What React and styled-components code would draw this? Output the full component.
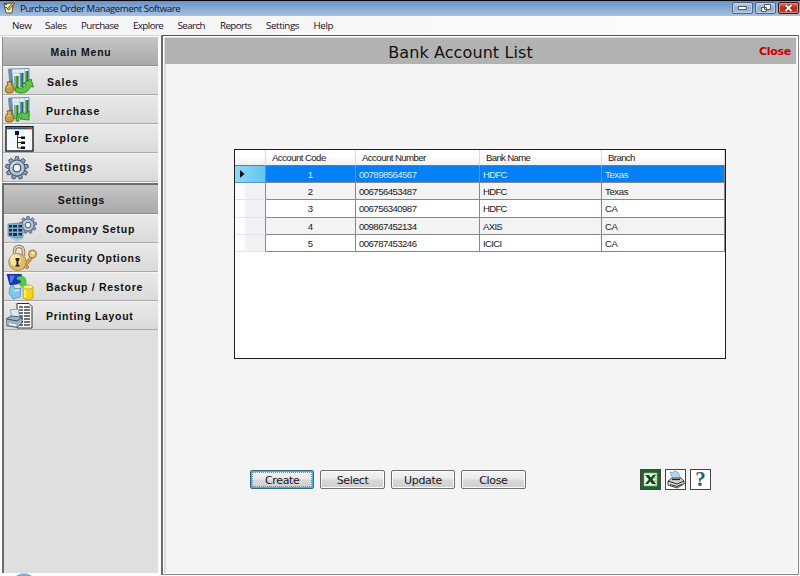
import React from 'react'
import styled, { createGlobalStyle, css } from 'styled-components'

const colors = {
  text: '#111',
  panel: '#f4f4f4',
  sidebar: '#dfdfdf',
  line: '#6b6b6b',
  selected: '#0580f5',
}

const GlobalStyle = createGlobalStyle`
  * {
    box-sizing: border-box;
  }
  body {
    margin: 0;
    overflow: hidden;
    background: #fbfbfb;
    color: ${colors.text};
  }
  svg {
    display: block;
  }
`

const Window = styled.div`
  width: 800px;
  height: 576px;
  display: flex;
  flex-direction: column;
  overflow: hidden;
`

const TitleBar = styled.header`
  height: 16px;
  flex: none;
  display: flex;
  align-items: flex-start;
  padding: 0 1px 0 3px;
  border-top: 1px solid #05060f;
  background: linear-gradient(#6d93c4, #86a9d2 45%, #a5c0e2);
`

const TitleText = styled.span`
  flex: 1;
  padding-left: 5px;
  font: 9.6px/15px 'Open Sans', sans-serif;
  letter-spacing: -0.42px;
  color: #0b1630;
  white-space: nowrap;
`

const WindowButtons = styled.div`
  display: flex;
  gap: 2px;
  padding-top: 1px;
`

const WindowButton = styled.div`
  width: 21px;
  height: 12px;
  display: flex;
  align-items: center;
  justify-content: center;
  border: 1px solid ${p => (p.$danger ? '#4b1414' : '#4b6483')};
  border-radius: 2px;
  box-shadow: inset 0 0 0 1px ${p => (p.$danger ? '#d98b7c' : '#bcd0ea')};
  background: ${p =>
    p.$danger
      ? 'linear-gradient(#d5806f, #b52a18 50%, #cc3f28)'
      : 'linear-gradient(#c0d3eb, #8fadd2 50%, #a4c0e2)'};
`

const MenuBar = styled.nav`
  height: 19px;
  flex: none;
  display: flex;
  padding-left: 12px;
  background: linear-gradient(90deg, #f4f4f4, #fcfcfc);
`

const MenuItem = styled.span`
  width: ${p => p.$width}px;
  flex: none;
  font: 9.8px/19px 'Open Sans', sans-serif;
  letter-spacing: ${p => p.$spacing}px;
  color: #1c0c24;
`

const Body = styled.div`
  flex: 1;
  min-height: 0;
  display: flex;
`

const Sidebar = styled.aside`
  width: 159px;
  flex: none;
  display: flex;
  flex-direction: column;
  padding: 1px 1px 3px 2px;
  border-top: 1px solid #d4d4d4;
`

const Group = styled.section`
  flex: ${p => (p.$fill ? 1 : 'none')};
  background: ${colors.sidebar};
  border-left: 1px solid #8a8a8a;
  ${p =>
    p.$fill &&
    css`
      margin-top: 1px;
      border-left: 2px solid #6c6c6c;
      border-top: 2px solid #6c6c6c;
    `}
`

const GroupTitle = styled.h2`
  height: 29px;
  margin: 0;
  padding-top: 1px;
  padding-left: 1px;
  border-bottom: 1px solid #8e8e8e;
  background: linear-gradient(#c6c6c6, #a9a9a9);
  font: bold 10.4px/29px 'Liberation Sans', sans-serif;
  letter-spacing: 0.8px;
  text-align: center;
`

const SideItem = styled.div`
  height: 29px;
  display: flex;
  align-items: center;
  border-top: 1px solid #f3f3f3;
  border-bottom: 1px solid #a9a9a9;
  background: linear-gradient(#e9e9e9, #dadada);
`

const SideIcon = styled.span`
  width: ${p => p.$width}px;
  flex: none;
  padding-left: 2px;
`

const SideLabel = styled.span`
  margin-top: ${p => p.$drop || 0}px;
  font: bold 10.5px/14px 'Liberation Sans', sans-serif;
  letter-spacing: ${p => p.$spacing}px;
  white-space: nowrap;
`

const Panel = styled.main`
  flex: 1;
  display: flex;
  flex-direction: column;
  margin: 0 1px 1px 2px;
  border: 1px solid #858585;
  border-top-color: #555;
  border-left: 2px solid #6b6b6b;
  background: ${colors.panel};
  box-shadow: inset 0 0 0 1px #fff, inset 2px 2px 0 1px #dcdcdc;
`

const PanelHeader = styled.div`
  height: 26px;
  margin: 2px 2px 0 2px;
  display: grid;
  grid-template-columns: 60px 1fr 60px;
  align-items: center;
  background: #b2b2b2;
`

const PanelTitle = styled.h1`
  grid-column: 2;
  margin: 3px 0 0;
  padding-right: 40px;
  font: 16px/20px 'DejaVu Sans', sans-serif;
  letter-spacing: 0.1px;
  text-align: center;
`

const CloseLink = styled.span`
  padding-top: 1px;
  padding-right: 5px;
  font: bold 11px/14px 'DejaVu Sans', sans-serif;
  letter-spacing: -0.3px;
  color: #cb0000;
  text-align: right;
`

const Grid = styled.div`
  width: 492px;
  height: 210px;
  margin: 85px 0 0 71px;
  border: 1px solid #1d1d1d;
  background: #fff;
`

const GridRow = styled.div`
  height: ${p => p.$height}px;
  display: grid;
  grid-template-columns: 31px 90px 124px 122px 123px;
  grid-template-rows: 100%;
  background: ${p => p.$bg};
  color: ${p => (p.$selected ? '#d5ecf8' : '#1a1a1a')};
`

const HeadCell = styled.div`
  padding-left: 6px;
  border-right: 1px solid #dadada;
  border-bottom: 1px solid #777;
  background: linear-gradient(#fff 40%, #f0f0f0);
  color: #1a1a1a;
  font: 9.6px/16px 'Liberation Sans', sans-serif;
  letter-spacing: ${p => p.$spacing || 0}px;
`

const Cell = styled.div`
  padding-left: ${p => (p.$center ? 0 : 3)}px;
  border-right: 1px solid #888;
  border-bottom: 1px solid #888;
  font: 9.6px/17px 'Liberation Sans', sans-serif;
  letter-spacing: ${p => p.$spacing || 0}px;
  text-align: ${p => (p.$center ? 'center' : 'left')};
`

const RowHeader = styled.div`
  display: flex;
  align-items: center;
  padding-left: 5px;
  border-right: 1px solid #888;
  border-bottom: 1px solid ${p => (p.$selected ? '#5798bb' : '#e4e4ea')};
  background: ${p =>
    p.$selected
      ? 'linear-gradient(90deg, #8fd8f5, #64c4ee)'
      : 'linear-gradient(90deg, #fff 25%, #f1f1f6 40%)'};
`

const Footer = styled.div`
  display: flex;
  align-items: center;
  margin: 110px 87px 0 87px;
`

const Buttons = styled.div`
  flex: 1;
  display: flex;
  gap: 6px;
`

const Button = styled.button`
  width: 64.4px;
  height: 19px;
  padding: 1px 0 0;
  border: 1px solid #6f6f6f;
  border-radius: 2px;
  background: linear-gradient(#f4f4f4, #e9e9e9 48%, #d9d9d9 52%, #cfcfcf);
  box-shadow: inset 0 0 0 1px #fafafa;
  color: #1a1424;
  font: 11px/17px 'DejaVu Sans', sans-serif;
  letter-spacing: -0.35px;
  ${p =>
    p.$focused &&
    css`
      border-color: #286b88;
      box-shadow: inset 0 0 0 1px #55b0d0;
      outline: 1px dotted #6c8f9c;
      outline-offset: -3px;
    `}
`

const Tools = styled.div`
  display: flex;
  gap: 4px;
`

const Tool = styled.div`
  width: 21px;
  height: 21px;
  display: flex;
  align-items: center;
  justify-content: center;
  border: 1px solid #444;
  background: ${p => p.$bg || '#fff'};
`

const HelpMark = styled.span`
  font: bold 21px/19px 'Liberation Serif', serif;
  color: #34566d;
`

// top of the start orb peeking out at the bottom of the window
const Orb = styled.div`
  position: absolute;
  left: 15px;
  top: 573px;
  width: 18px;
  height: 12px;
  border-radius: 50%;
  border-top: 1px solid #b4cfe0;
  background: #72add2;
`

const AppIcon = () => (
  <svg width="12" height="13" viewBox="0 0 12 13">
    <path d="M1 3l7-1 2 2-1 8H3z" fill="#f6f2dc" stroke="#5b5330" />
    <path d="M4 8l6-7 1.500 1L6 9z" fill="#dfb83a" stroke="#4c3b10" strokeWidth=".7" />
    <path d="M1 2l3 2M2 6l2 1" stroke="#222" />
  </svg>
)

const SalesIcon = ({ purchase }) => (
  <svg width="29" height="26" viewBox="0 0 29 26">
    <path d="M4 1l20-.5v19L6 22z" fill="#e4edf3" stroke="#7890a5" />
    <path d="M3 1h4l2 20-4 .5z" fill="#6f8fb0" />
    <path d="M9 5h14M9 9h14M14.500 1v19M19.500 1v17" stroke="#b5c8d6" strokeWidth=".7" />
    <path d="M9.500 8h4v13h-4z" fill="#2d7b45" />
    <path d="M9.500 8h2v13h-2z" fill="#86bd5f" />
    <path d="M15 5h3.500v14H15z" fill="#236b6a" />
    <path d="M15 5h1.500v14H15z" fill="#5da2a5" />
    <path d="M20 3h3.500v14H20z" fill="#2c6d40" />
    <path d="M20 3h1.500v14H20z" fill="#7db15c" />
    {purchase ? (
      <path
        d="M11 24c0-8 6-10 10-7l3-3v9l-9-1 2.500-2.500C15 18 13 20 14 24z"
        fill="#5cc848"
        stroke="#1f7a1f"
        strokeWidth=".8"
      />
    ) : (
      <path
        d="M11 19c5 2 8 1 10-3l-3-.500 8-4.500 2.500 8-3-.500c-3 7-9 8-15 5z"
        fill="#5cc83e"
        stroke="#1f7a1c"
        strokeWidth=".8"
      />
    )}
    <path d="M2 14l5-1-1 3c4 3 4 8 0 9H2c-3-2-2-6 1-9z" fill="#c9993c" stroke="#6f4e18" strokeWidth=".8" />
    <path d="M3 16h3M2 20c1-2 3-2 4-1" stroke="#f2d58a" fill="none" />
  </svg>
)

const ExploreIcon = () => (
  <svg width="29" height="26" viewBox="0 0 29 26">
    <rect x="1" y=".7" width="27" height="24.300" fill="#f5fafc" stroke="#171c28" strokeWidth="1.400" />
    <path d="M1.500 2.300h22" stroke="#385473" strokeWidth="2" />
    <path d="M23 2.300h4" stroke="#b83532" strokeWidth="2" />
    <path d="M10 5h4v4h-4z" fill="#111" />
    <path d="M12.500 9v13h4M12.500 11.500h4M12.500 16.500h4" fill="none" stroke="#333" />
    <path d="M16 10.500h4V13h-4zM16 15.500h4V18h-4zM16 20.500h4V23h-4z" fill="#111" />
  </svg>
)

const teeth = [0, 40, 80, 120, 160, 200, 240, 280, 320]

const Gear = ({ size = 24 }) => (
  <svg width={size} height={size} viewBox="0 0 24 24">
    <g fill="#8da3b8" stroke="#3f566d" strokeWidth=".9">
      {teeth.map(a => (
        <path key={a} d="M9.500 5l1-4.300h3l1 4.300z" transform={`rotate(${a} 12 12)`} />
      ))}
      <circle cx="12" cy="12" r="8" />
    </g>
    <circle cx="12" cy="12" r="7.200" fill="#b3c4d3" />
    <circle cx="12" cy="12" r="3.800" fill="#eef2f4" stroke="#445b72" strokeWidth="1.300" />
    <path d="M6.500 11c.4-3 2.500-4.500 5-4.700" stroke="#e7eef4" fill="none" />
  </svg>
)

const CompanyIcon = () => (
  <svg width="31" height="26" viewBox="0 0 31 26">
    <svg x="13" y="0" width="18" height="18">
      <Gear size={18} />
    </svg>
    <path d="M4 22l7 3.500 7-3-6-3z" fill="#a3c6dc" />
    <path d="M2 8l10-1 5 1v13l-6 1-9-2z" fill="#86abc9" stroke="#567892" strokeWidth=".6" />
    <path d="M3 9h3v2.500H3zM7 9h4v2.500H7zM3 13h3v2.500H3zM7 13h4v2.500H7zM3 17h3v2.500H3zM7 17h4v3H7zM12.500 9H16v2.500h-3.500zM12.500 13H16v2.500h-3.500zM12.500 17H16v2.500h-3.500z" fill="#143252" />
  </svg>
)

const LockIcon = () => (
  <svg width="32" height="28" viewBox="0 0 32 28">
    <path d="M8.500 12V7c0-6 9-6 9 0v5" fill="none" stroke="#8a7959" strokeWidth="3.500" />
    <path d="M8.500 12V7c0-6 9-6 9 0v5" fill="none" stroke="#e5d8b6" strokeWidth="1.600" />
    <path d="M17 21l8-9 2 2-6 7 2 2-2 2-2-2-2 2z" fill="#d4a64c" stroke="#8a6322" strokeWidth=".7" />
    <circle cx="26.500" cy="10" r="4" fill="#e7c67a" stroke="#94702d" />
    <circle cx="27" cy="9" r="1.300" fill="#f6edcf" />
    <ellipse cx="11.500" cy="18" rx="8.800" ry="8.500" fill="#e3b963" stroke="#a47a2d" strokeWidth=".8" />
    <ellipse cx="9.500" cy="16" rx="5.500" ry="6" fill="#f6e2ab" />
    <path d="M9.500 14h4v2l-1 1v4h1v1.500h-4V21h1v-4l-1-1z" fill="#2a2111" />
  </svg>
)

const BackupIcon = () => (
  <svg width="29" height="26" viewBox="0 0 29 26">
    <path d="M1 0h14l2 9-13 2z" fill="#1c35b9" stroke="#16226c" strokeWidth=".7" />
    <path d="M4 1.500h5l-3 7-2 0z" fill="#4e7aee" />
    <path d="M11 3c5-2 9 0 9 4v4l2 0-5 3-5-5 3 0c0-3-2-4-4-3z" fill="#4ed044" stroke="#269327" strokeWidth=".5" />
    <path d="M4 13l3-2 2 4 6-1-1 9-7 2-4-6z" fill="#80c9ee" stroke="#3489bb" strokeWidth=".7" />
    <path d="M8 17l5-1" stroke="#fff" />
    <path d="M17 13v11c2 2 8 2 10 0V13z" fill="#f5d41b" stroke="#ad8c09" strokeWidth=".6" />
    <ellipse cx="22" cy="13" rx="5" ry="2" fill="#fff27a" stroke="#b49b22" strokeWidth=".6" />
    <path d="M19 15.500v8" stroke="#fff59b" strokeWidth="1.500" />
  </svg>
)

const PrinterPageIcon = () => (
  <svg width="29" height="26" viewBox="0 0 29 26">
    <path d="M11 .5h12l3 3V25H11z" fill="#fff" stroke="#303030" />
    <path d="M13 4h4M18 4h6M13 7h4M18 7h6M13 10h4M18 10h6M13 13h4M18 13h6M13 16h4M18 16h6M13 19h4M18 19h6M13 22h4M18 22h6" stroke="#444" strokeWidth="1.300" />
    <path d="M4 7l8-1 2 9H6z" fill="#d6e9f5" stroke="#6389a3" strokeWidth=".7" />
    <path d="M0 16l5-3 11 1v6l-5 4.500-11-2z" fill="#a4b2bf" stroke="#3a4855" strokeWidth=".8" />
    <path d="M1 16l10 2 5-4" fill="none" stroke="#3f4f5d" />
    <path d="M3 21l7 1.500" stroke="#f4f6f8" strokeWidth="1.500" />
  </svg>
)

const ExcelIcon = () => (
  <svg width="19" height="19" viewBox="0 0 19 19">
    <path d="M3 3h13v13H3z" fill="#eef6ea" stroke="#7da27b" strokeWidth=".7" />
    <path d="M13 5h2.500M13 8h2.500M13 11h2.500M13 14h2.500" stroke="#7ba478" />
    <path d="M4 5h4l1.800 2.500L12 5h3l-3.500 4.500L15 14h-4l-1.800-2.500L7 14H4l3.700-4.500z" fill="#164d1c" />
  </svg>
)

const PrintIcon = () => (
  <svg width="19" height="19" viewBox="0 0 19 19">
    <path d="M4 2l3 1 1-2 4 1 3 7-8 1z" fill="#b3d5f2" stroke="#6f99ba" strokeWidth=".7" />
    <path d="M2 11l4-3 9 0 3 3v3l-7 4-9-3z" fill="#d4d4cc" stroke="#333" strokeWidth=".9" />
    <path d="M2 11l9 3 7-3M4 14.500l7 2 5-2.500" fill="none" stroke="#333" />
    <path d="M6 9.500l8 0" stroke="#222" strokeWidth="1.200" />
  </svg>
)

const MarkerIcon = () => (
  <svg width="5" height="8" viewBox="0 0 5 8">
    <path d="M0 0l4.500 4L0 8z" fill="#0a1020" />
  </svg>
)

const menu = [
  { label: 'New', width: 33, spacing: -0.3 },
  { label: 'Sales', width: 36, spacing: -0.4 },
  { label: 'Purchase', width: 52, spacing: -0.6 },
  { label: 'Explore', width: 44.5, spacing: -0.6 },
  { label: 'Search', width: 42.5, spacing: -0.6 },
  { label: 'Reports', width: 46, spacing: -0.6 },
  { label: 'Settings', width: 47.5, spacing: -0.4 },
  { label: 'Help', width: 30, spacing: -0.4 },
]

const mainItems = [
  { label: 'Sales', icon: <SalesIcon />, width: 44, drop: 3 },
  { label: 'Purchase', icon: <SalesIcon purchase />, width: 43, drop: 2 },
  { label: 'Explore', icon: <ExploreIcon />, width: 42, drop: -2 },
  { label: 'Settings', icon: <Gear />, width: 42, drop: -2 },
]

const settingsItems = [
  { label: 'Company Setup', icon: <CompanyIcon /> },
  { label: 'Security Options', icon: <LockIcon /> },
  { label: 'Backup / Restore', icon: <BackupIcon /> },
  { label: 'Printing Layout', icon: <PrinterPageIcon /> },
]

const accounts = [
  { code: 1, number: '007898564567', bank: 'HDFC', branch: 'Texas' },
  { code: 2, number: '006756453487', bank: 'HDFC', branch: 'Texas' },
  { code: 3, number: '006756340987', bank: 'HDFC', branch: 'CA' },
  { code: 4, number: '009867452134', bank: 'AXIS', branch: 'CA' },
  { code: 5, number: '006787453246', bank: 'ICICI', branch: 'CA' },
]

const rowColor = i => {
  if (i === 0) return colors.selected
  return i % 2 ? '#f3f3f3' : '#fff'
}

const App = () => (
  <Window>
    <GlobalStyle />
    <TitleBar>
      <AppIcon />
      <TitleText>Purchase Order Management Software</TitleText>
      <WindowButtons>
        <WindowButton>
          <svg width="9" height="4" viewBox="0 0 9 4">
            <path d="M.5.500h8v3h-8z" fill="#fff" stroke="#4c5868" />
          </svg>
        </WindowButton>
        <WindowButton>
          <svg width="10" height="9" viewBox="0 0 10 9">
            <path d="M3.500.500h6v5h-6zM.5 3.500h5v4h-5z" fill="#f4f7fb" stroke="#4c5868" />
          </svg>
        </WindowButton>
        <WindowButton $danger>
          <svg width="9" height="8" viewBox="0 0 9 8">
            <path d="M1.500 1l6 6M7.500 1l-6 6" stroke="#5a1a1a" strokeWidth="3" />
            <path d="M1.500 1l6 6M7.500 1l-6 6" stroke="#fff" strokeWidth="1.800" />
          </svg>
        </WindowButton>
      </WindowButtons>
    </TitleBar>
    <MenuBar>
      {menu.map(item => (
        <MenuItem key={item.label} $width={item.width} $spacing={item.spacing}>
          {item.label}
        </MenuItem>
      ))}
    </MenuBar>
    <Body>
      <Sidebar>
        <Group>
          <GroupTitle>Main Menu</GroupTitle>
          {mainItems.map(item => (
            <SideItem key={item.label}>
              <SideIcon $width={item.width}>{item.icon}</SideIcon>
              <SideLabel $spacing={0.85} $drop={item.drop}>
                {item.label}
              </SideLabel>
            </SideItem>
          ))}
        </Group>
        <Group $fill>
          <GroupTitle>Settings</GroupTitle>
          {settingsItems.map(item => (
            <SideItem key={item.label}>
              <SideIcon $width={42}>{item.icon}</SideIcon>
              <SideLabel $spacing={0.7}>{item.label}</SideLabel>
            </SideItem>
          ))}
        </Group>
      </Sidebar>
      <Panel>
        <PanelHeader>
          <PanelTitle>Bank Account List</PanelTitle>
          <CloseLink>Close</CloseLink>
        </PanelHeader>
        <Grid>
          <GridRow $height={16} $bg="#fff">
            <HeadCell />
            <HeadCell $spacing={-0.55}>Account Code</HeadCell>
            <HeadCell $spacing={-0.55}>Account Number</HeadCell>
            <HeadCell $spacing={-0.65}>Bank Name</HeadCell>
            <HeadCell $spacing={-0.6}>Branch</HeadCell>
          </GridRow>
          {accounts.map((account, i) => (
            <GridRow
              key={account.code}
              $height={i === 2 ? 18 : 17}
              $bg={rowColor(i)}
              $selected={i === 0}
            >
              <RowHeader $selected={i === 0}>{i === 0 && <MarkerIcon />}</RowHeader>
              <Cell $center>{account.code}</Cell>
              <Cell $spacing={-0.55}>{account.number}</Cell>
              <Cell $spacing={-0.7}>{account.bank}</Cell>
              <Cell $spacing={-0.4}>{account.branch}</Cell>
            </GridRow>
          ))}
        </Grid>
        <Footer>
          <Buttons>
            <Button $focused>Create</Button>
            <Button>Select</Button>
            <Button>Update</Button>
            <Button>Close</Button>
          </Buttons>
          <Tools>
            <Tool $bg="#1f6327">
              <ExcelIcon />
            </Tool>
            <Tool>
              <PrintIcon />
            </Tool>
            <Tool>
              <HelpMark>?</HelpMark>
            </Tool>
          </Tools>
        </Footer>
      </Panel>
    </Body>
    <Orb />
  </Window>
)

export default App
